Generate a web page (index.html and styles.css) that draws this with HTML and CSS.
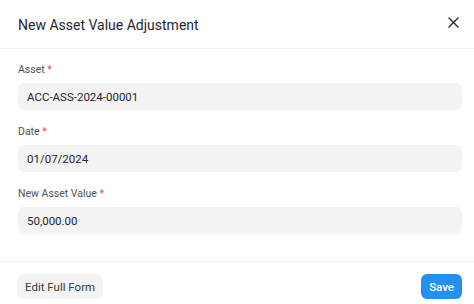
FILE: index.html
```html
<!DOCTYPE html>
<html>
<head>
<meta charset="utf-8">
<link rel="stylesheet" href="styles.css">
</head>
<body>
<div class="modal">
  <div class="modal-header">
    <div class="modal-title">New Asset Value Adjustment</div>
    <button class="close-btn" aria-label="Close">
      <svg width="11" height="11" viewBox="0 0 11 11"><path d="M1 1 L10 10 M10 1 L1 10" stroke="#1f272e" stroke-width="1.4" stroke-linecap="round" fill="none"/></svg>
    </button>
  </div>
  <div class="modal-body">
    <div class="field">
      <label class="field-label">Asset <span class="req">*</span></label>
      <div class="input">ACC-ASS-2024-00001</div>
    </div>
    <div class="field">
      <label class="field-label">Date <span class="req">*</span></label>
      <div class="input">01/07/2024</div>
    </div>
    <div class="field">
      <label class="field-label">New Asset Value <span class="req">*</span></label>
      <div class="input">50,000.00</div>
    </div>
  </div>
  <div class="modal-footer">
    <button class="btn btn-secondary">Edit Full Form</button>
    <button class="btn btn-primary">Save</button>
  </div>
</div>
</body>
</html>
```

FILE: styles.css
```css
* { box-sizing: border-box; }
html, body { margin: 0; padding: 0; background: #fff; }
body { font-family: Roboto, Inter, "Noto Sans", sans-serif; color: #1f272e; }
.modal { width: 474px; height: 304px; background: #fff; display: flex; flex-direction: column; }
.modal-header {
  height: 49px; padding: 0 15px 0 18px;
  display: flex; align-items: center; justify-content: space-between;
  border-bottom: 1px solid #f1f1f1;
}
.modal-title { font-size: 14px; font-weight: 400; color: #1f272e; margin-top: 1px; }
.close-btn { border: 0; background: transparent; padding: 0; display: flex; align-items: center; justify-content: center; width: 11px; height: 11px; margin-top: -3px; }
.modal-body { padding: 14px 12px 27px 18px; display: flex; flex-direction: column; gap: 15px; border-bottom: 1px solid #f1f1f1; }
.field { display: flex; flex-direction: column; gap: 6px; }
.field-label { font-size: 10.5px; color: #525252; line-height: 14px; }
.req { color: #e24c4c; }
.input { height: 27px; background: #f3f3f3; border-radius: 6px; padding: 0 9px; display: flex; align-items: center; font-size: 11.5px; color: #1f272e; }
.modal-footer { padding: 12px 12px 0 17px; display: flex; justify-content: space-between; align-items: flex-start; }
.btn { border: 0; height: 25px; border-radius: 6px; font-family: Roboto, Inter, "Noto Sans", sans-serif; font-size: 11.5px; padding: 0 8px; }
.btn-secondary { background: #f3f3f3; color: #383838; }
.btn-primary { background: #2490ef; color: #fff; font-weight: 500; padding: 0 8px; }
```
